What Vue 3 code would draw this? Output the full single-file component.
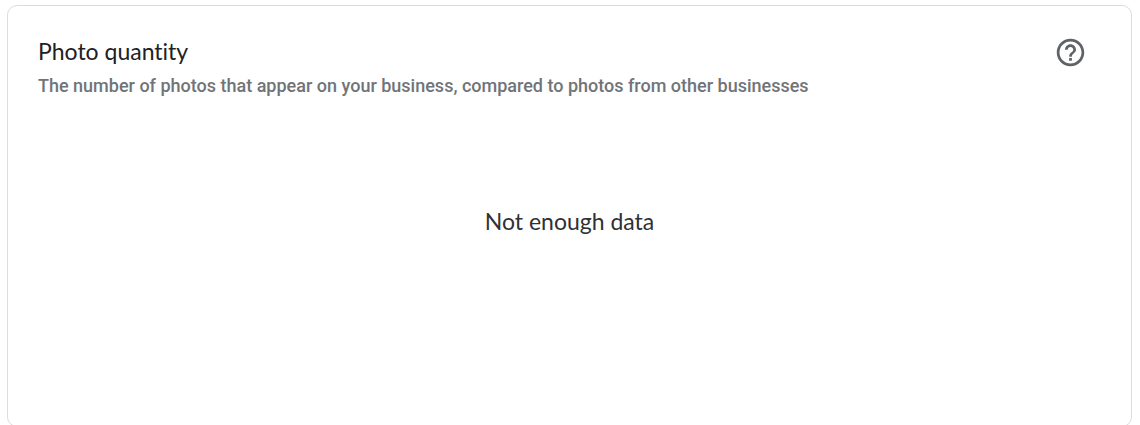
<script setup>
const title = 'Photo quantity'
const subtitle = 'The number of photos that appear on your business, compared to photos from other businesses'
const message = 'Not enough data'
</script>

<template>
  <main class="page">
    <section class="card" aria-labelledby="card-title">
      <header class="head">
        <div class="titles">
          <h2 id="card-title" class="title">{{ title }}</h2>
          <p class="subtitle">{{ subtitle }}</p>
        </div>
        <button class="help" type="button" aria-label="Help">
          <svg viewBox="0 0 24 24" width="33" height="33" aria-hidden="true">
            <path fill="currentColor" d="M11 18h2v-2h-2v2zm1-16C6.480 2 2 6.480 2 12s4.480 10 10 10 10-4.480 10-10S17.520 2 12 2zm0 18c-4.410 0-8-3.590-8-8s3.590-8 8-8 8 3.590 8 8-3.590 8-8 8zm0-14c-2.210 0-4 1.790-4 4h2c0-1.100.9-2 2-2s2 .9 2 2c0 2-3 1.750-3 5h2c0-2.250 3-2.500 3-5 0-2.210-1.790-4-4-4z" />
          </svg>
        </button>
      </header>
      <p class="message">{{ message }}</p>
    </section>
  </main>
</template>

<style>
body {
  background: #fff;
}
</style>

<style scoped>
.page {
  box-sizing: border-box;
  height: 100vh;
  overflow: hidden;
  padding: 5px 8px 0 7px;
  font-family: Roboto, "Liberation Sans", sans-serif;
}
.card {
  box-sizing: border-box;
  min-height: 422px;
  padding: 30px 44px 30px 30px;
  border: 1px solid #dadce0;
  border-radius: 10px;
}
.head {
  display: flex;
  align-items: flex-start;
  justify-content: space-between;
}
.title,
.message {
  font-family: Lato, "Open Sans", sans-serif;
  font-size: 23px;
  font-weight: 400;
  font-variant-ligatures: none;
  line-height: 30px;
}
.title {
  margin: 0;
  color: #202124;
}
.subtitle {
  margin: 8px 0 0;
  font-size: 18px;
  font-weight: 500;
  line-height: 24px;
  color: #707478;
}
.help {
  display: flex;
  margin: 0;
  padding: 0;
  border: 0;
  background: none;
  color: #5f6368;
  cursor: pointer;
}
.message {
  margin: 108px 0 0;
  padding-left: 14px;
  text-align: center;
  color: #2f3134;
}
</style>
